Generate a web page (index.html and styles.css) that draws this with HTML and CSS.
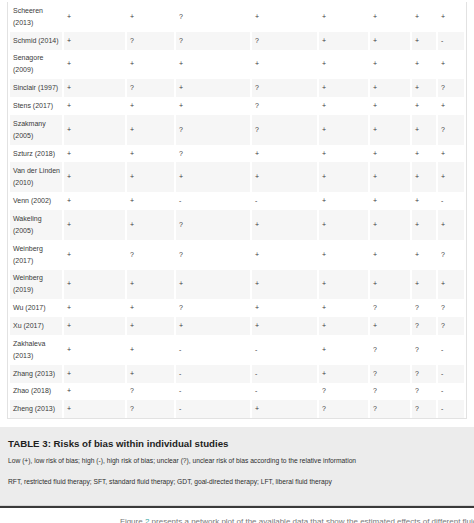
FILE: index.html
```html
<!DOCTYPE html>
<html lang="en">
<head>
<meta charset="utf-8">
<title>Table 3</title>
<link rel="stylesheet" href="styles.css">
</head>
<body>
<div class="table-wrap">
  <table class="rob">
    <colgroup>
      <col class="c-name"><col class="c2"><col class="c3"><col class="c4"><col class="c5"><col class="c6"><col class="c7"><col class="c8"><col class="c9">
    </colgroup>
    <tbody>
      <tr><td>Scheeren (2013)</td><td>+</td><td>+</td><td>?</td><td>+</td><td>+</td><td>+</td><td>+</td><td>+</td></tr>
      <tr><td>Schmid (2014)</td><td>+</td><td>?</td><td>?</td><td>?</td><td>+</td><td>+</td><td>+</td><td>-</td></tr>
      <tr><td>Senagore (2009)</td><td>+</td><td>+</td><td>+</td><td>+</td><td>+</td><td>+</td><td>+</td><td>+</td></tr>
      <tr><td>Sinclair (1997)</td><td>+</td><td>?</td><td>+</td><td>?</td><td>+</td><td>+</td><td>+</td><td>?</td></tr>
      <tr><td>Stens (2017)</td><td>+</td><td>+</td><td>+</td><td>?</td><td>+</td><td>+</td><td>+</td><td>+</td></tr>
      <tr><td>Szakmany (2005)</td><td>+</td><td>+</td><td>?</td><td>?</td><td>+</td><td>+</td><td>+</td><td>?</td></tr>
      <tr><td>Szturz (2018)</td><td>+</td><td>+</td><td>?</td><td>+</td><td>+</td><td>+</td><td>+</td><td>+</td></tr>
      <tr><td>Van der Linden (2010)</td><td>+</td><td>+</td><td>+</td><td>+</td><td>+</td><td>+</td><td>+</td><td>+</td></tr>
      <tr><td>Venn (2002)</td><td>+</td><td>+</td><td>-</td><td>-</td><td>+</td><td>+</td><td>+</td><td>-</td></tr>
      <tr><td>Wakeling (2005)</td><td>+</td><td>+</td><td>?</td><td>+</td><td>+</td><td>+</td><td>+</td><td>+</td></tr>
      <tr><td>Weinberg (2017)</td><td>+</td><td>?</td><td>?</td><td>+</td><td>+</td><td>+</td><td>+</td><td>?</td></tr>
      <tr><td>Weinberg (2019)</td><td>+</td><td>+</td><td>+</td><td>+</td><td>+</td><td>+</td><td>+</td><td>+</td></tr>
      <tr><td>Wu (2017)</td><td>+</td><td>+</td><td>?</td><td>+</td><td>+</td><td>?</td><td>?</td><td>?</td></tr>
      <tr><td>Xu (2017)</td><td>+</td><td>+</td><td>+</td><td>+</td><td>+</td><td>+</td><td>?</td><td>?</td></tr>
      <tr><td>Zakhaleva (2013)</td><td>+</td><td>+</td><td>-</td><td>-</td><td>+</td><td>?</td><td>?</td><td>-</td></tr>
      <tr><td>Zhang (2013)</td><td>+</td><td>+</td><td>-</td><td>-</td><td>+</td><td>?</td><td>?</td><td>-</td></tr>
      <tr><td>Zhao (2018)</td><td>+</td><td>?</td><td>-</td><td>-</td><td>?</td><td>?</td><td>?</td><td>-</td></tr>
      <tr><td>Zheng (2013)</td><td>+</td><td>?</td><td>-</td><td>+</td><td>?</td><td>?</td><td>?</td><td>-</td></tr>
    </tbody>
  </table>
</div>
<div class="caption">
  <h3 class="caption-title">TABLE 3: Risks of bias within individual studies</h3>
  <p class="caption-line">Low (+), low risk of bias; high (-), high risk of bias; unclear (?), unclear risk of bias according to the relative information</p>
  <p class="caption-line second">RFT, restricted fluid therapy; SFT, standard fluid therapy; GDT, goal-directed therapy; LFT, liberal fluid therapy</p>
</div>
<div class="rule"></div>
<p class="body-text">Figure <a class="ref" href="#">2</a> presents a network plot of the available data that show the estimated effects of different fluid</p>
</body>
</html>
```
FILE: styles.css
```css
html, body {
  margin: 0;
  padding: 0;
  overflow: hidden;
  background: #ffffff;
}
body {
  font-family: "Liberation Sans", Arial, sans-serif;
  color: #333333;
}
.table-wrap {
  padding: 2px 7px 0 7px;
}
.rob {
  width: 460px;
  table-layout: fixed;
  border-collapse: separate;
  border-spacing: 2px 0;
  border: 1px solid #e2e2e2;
  border-top: none;
  font-size: 7px;
  line-height: 12px;
  color: #3a3a3a;
}
.rob td {
  padding: 2.9px 2px 2.9px 3px;
  vertical-align: middle;
  text-align: left;
}
.rob tr:nth-child(even) td {
  background: #f6f6f6;
}
.c-name { width: 52px; }
.c2 { width: 61px; }
.c3 { width: 47px; }
.c4 { width: 74px; }
.c5 { width: 65px; }
.c6 { width: 49px; }
.c7 { width: 40px; }
.c8 { width: 24px; }
.c9 { width: 26px; }

.caption {
  margin-top: 8px;
  background: #ececec;
  padding: 11px 8px 19.5px 8px;
  border-bottom: 1px solid #d6d6d6;
}
.caption-title {
  margin: 0;
  font-size: 9.7px;
  line-height: 12px;
  font-weight: bold;
  color: #1e1e1e;
}
.caption-line {
  margin: 5.5px 0 0 0;
  font-size: 6.7px;
  line-height: 9px;
  color: #2e2e2e;
}
.caption-line.second {
  margin-top: 12px;
}
.rule {
  height: 2px;
  background: #3a3a3a;
}
.body-text {
  margin: 9px 0 0 120px;
  font-family: "Liberation Sans", Arial, sans-serif;
  font-size: 8px;
  line-height: 10px;
  color: #777777;
  white-space: nowrap;
}
.ref {
  color: #3aa6a0;
  text-decoration: none;
}
```
